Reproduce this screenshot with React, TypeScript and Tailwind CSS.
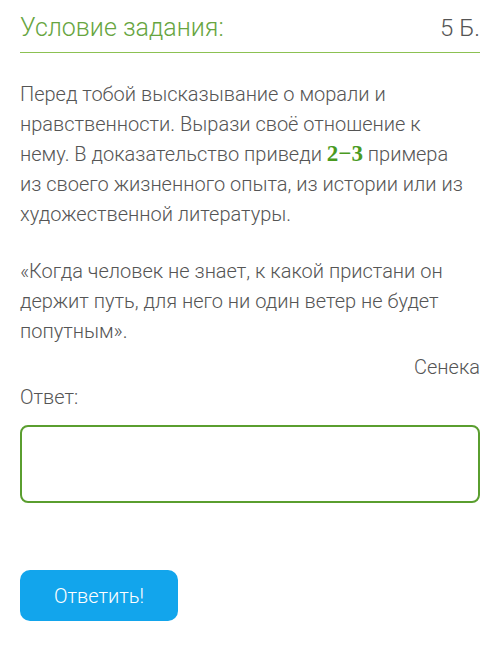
export default function App() {
  return (
    <div className="min-h-screen w-full bg-white px-5 pt-[12px] font-['Roboto',sans-serif] font-light text-[#555555]">
      <div className="flex items-end justify-between border-b border-[#8cc152] pb-[8px]">
        <h1 className="text-[25px] leading-[32px] text-[#67a53f]">Условие задания:</h1>
        <span className="text-[24px] leading-[32px] text-[#555555]">5 Б.</span>
      </div>

      <div className="max-w-[452px] pt-[26px] text-[20px] leading-[30px]">
        <p>
          Перед тобой высказывание о морали и нравственности. Вырази своё отношение к нему. В
          доказательство приведи{" "}
          <span className="inline-block font-['Liberation_Serif',serif] text-[23px] leading-[30px] font-bold text-[#4a9a1f]">
            2−3
          </span>{" "}
          примера из своего жизненного опыта, из истории или из художественной литературы.
        </p>
        <p className="mt-[27px]">
          «Когда человек не знает, к какой пристани он держит путь, для него ни один ветер не будет
          попутным».
        </p>
      </div>
      <p className="mt-[6px] text-right text-[20px] leading-[30px]">Сенека</p>
      <p className="text-[20px] leading-[30px]">Ответ:</p>

      <div className="mt-[13px] h-[78px] w-full rounded-[8px] border-2 border-[#5a9e2f]" />

      <button className="mt-[67px] h-[51px] w-[158px] rounded-[10px] bg-[#12a5ec] text-[20px] text-white">
        Ответить!
      </button>
    </div>
  );
}
